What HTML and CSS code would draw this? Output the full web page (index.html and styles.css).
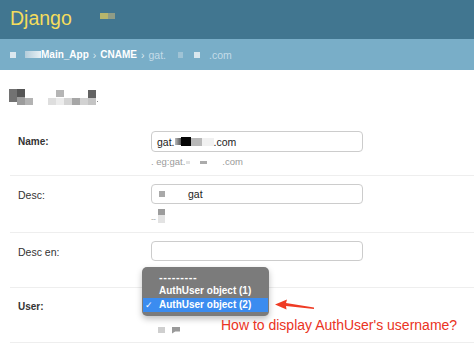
FILE: index.html
```html
<!DOCTYPE html>
<html lang="en">
<head>
    <meta charset="UTF-8">
    <title>Change CNAME | Django site admin</title>
    <link rel="stylesheet" href="styles.css">
</head>
<body>
    <header class="header">
        <div class="branding">Django</div>
        <span class="header-user"></span>
    </header>

    <div class="breadcrumbs">
        <span class="crumb-home"></span><span class="crumb-blur"></span><a>Main_App</a><span class="sep">›</span><a>CNAME</a><span class="sep">›</span><span class="current">gat.</span><span class="crumb-faint"></span><span class="crumb-square"></span><span class="current">.com</span>
    </div>

    <div class="content">
        <h1 class="title">
            <!-- pixelated (redacted) page title -->
            <svg width="92" height="17" viewBox="0 0 92 17">
                <rect x="0" y="0" width="8" height="13" fill="#727272"/>
                <rect x="8" y="0" width="8" height="8" fill="#555555"/>
                <rect x="8" y="8" width="8" height="8" fill="#9c9c9c"/>
                <rect x="16" y="9" width="8" height="7" fill="#b3b3b3"/>
                <rect x="39" y="9" width="8" height="7" fill="#dedede"/>
                <rect x="47" y="1" width="8" height="7" fill="#b5b5b5"/>
                <rect x="47" y="9" width="8" height="7" fill="#ececec"/>
                <rect x="55" y="9" width="8" height="7" fill="#d4d4d4"/>
                <rect x="63" y="9" width="8" height="7" fill="#a6a6a6"/>
                <rect x="71" y="9" width="8" height="7" fill="#d2d2d2"/>
                <rect x="79" y="1" width="8" height="8" fill="#626262"/>
                <rect x="79" y="9" width="8" height="7" fill="#c4c4c4"/>
                <rect x="88" y="12" width="1" height="1" fill="#888888"/>
            </svg>
        </h1>

        <form class="change-form">
            <div class="form-row">
                <label class="required">Name:</label>
                <div class="field">
                    <div class="input">gat.<span class="mask-a"></span><span class="mask-b"></span><span class="mask-c"></span><span class="mask-d"></span>.com</div>
                    <div class="help">. eg:gat.<span class="help-faint"></span><span class="help-dash"></span>.com</div>
                </div>
            </div>

            <div class="form-row">
                <label>Desc:</label>
                <div class="field">
                    <div class="input"><span class="desc-square"></span><span class="desc-text">gat</span></div>
                    <div class="help help-blocks"><span class="dashes">--</span><span class="help-flag"></span></div>
                </div>
            </div>

            <div class="form-row">
                <label>Desc en:</label>
                <div class="field">
                    <div class="input"></div>
                    <div class="help help-empty"></div>
                </div>
            </div>

            <div class="form-row user-row">
                <label class="required">User:</label>
                <div class="field">
                    <div class="select"></div>
                    <div class="help help-icons"><span class="icon-a"></span><span class="icon-b"></span></div>
                </div>

                <div class="menu">
                    <div class="opt"><span class="check"></span><span class="dashes-opt">---------</span></div>
                    <div class="opt"><span class="check"></span>AuthUser object (1)</div>
                    <div class="opt selected"><span class="check">✓</span>AuthUser object (2)</div>
                </div>

                <svg class="arrow" width="42" height="14" viewBox="0 0 42 14">
                    <path d="M1 5.5 L13 0.5 L12 4 L40 8.5 L40 10 L12 7 L12.5 10.5 Z" fill="#ef3b24"/>
                </svg>
                <div class="note">How to display AuthUser's username?</div>
            </div>
        </form>
    </div>
</body>
</html>
```

FILE: styles.css
```css
body, html {
    margin: 0;
    padding: 0;
    font-family: "Liberation Sans", Arial, Helvetica, sans-serif;
    color: #333;
    background: #fff;
}

.header {
    display: flex;
    align-items: flex-start;
    height: 39px;
    background: #417690;
    padding-left: 10px;
}

.branding {
    font-size: 19.5px;
    line-height: 37px;
    color: #f5dd5d;
}

.header-user {
    width: 15px;
    height: 6px;
    margin: 13px 0 0 28px;
    background: linear-gradient(90deg, #b6b56c 0 55%, #8f9c86 55%);
}

.breadcrumbs {
    display: flex;
    align-items: center;
    height: 31px;
    padding-left: 10px;
    background: #79aec8;
    font-size: 10.5px;
    color: #c4dce8;
}

.breadcrumbs a {
    color: #fff;
    font-weight: bold;
    font-size: 10px;
}

.breadcrumbs .sep {
    margin: 0 4px;
    color: #dbe9f0;
}

.crumb-home {
    width: 6px;
    height: 6px;
    background: #dce8ef;
    margin-right: 9px;
}

.crumb-blur {
    width: 16px;
    height: 7px;
    background: linear-gradient(90deg, #b3cddb, #e9f1f5);
}

.crumb-faint {
    width: 5px;
    height: 6px;
    margin-left: 12px;
    background: #9fc3d5;
}

.crumb-square {
    width: 6px;
    height: 6px;
    margin: 0 9px 0 11px;
    background: #d9e7ee;
}

.content {
    padding: 19px 0 0 0;
}

.title {
    margin: 0 0 0 9px;
    height: 17px;
    line-height: 0;
}

.change-form {
    margin-top: 16px;
}

.form-row {
    display: flex;
    margin-left: 10px;
    padding: 8px 0 8px 8px;
    border-bottom: 1px solid #eee;
}

.form-row:first-child {
    padding-top: 9px;
    padding-bottom: 7px;
}

.form-row label {
    width: 133px;
    font-size: 10.5px;
    line-height: 20px;
    padding-top: 1px;
    color: #333;
}

.form-row label.required {
    font-weight: bold;
    font-size: 10px;
}

.field {
    display: flex;
    flex-direction: column;
}

.input {
    box-sizing: border-box;
    width: 212px;
    height: 20px;
    border: 1px solid #ccc;
    border-radius: 4px;
    padding-left: 5px;
    font-size: 10.5px;
    line-height: 18px;
    color: #222;
    display: flex;
    align-items: center;
}

.form-row:first-child .input {
    height: 21px;
}

.mask-a { width: 6px; height: 7px; background: linear-gradient(90deg, #bbb, #555); }
.mask-b { width: 10px; height: 9px; background: #050505; }
.mask-c { width: 11px; height: 8px; background: #b9b9b9; }
.mask-d { width: 12px; height: 8px; background: #f1f1f1; }

.help {
    margin-top: 4px;
    font-size: 9.5px;
    line-height: 12px;
    color: #9a9a9a;
    display: flex;
    align-items: center;
}

.help-faint {
    width: 4px;
    height: 3px;
    margin-left: 1px;
    background: #e2e2e2;
}

.help-dash {
    width: 7px;
    height: 3px;
    margin: 0 15px 0 10px;
    background: #ababab;
}

.desc-square {
    width: 6px;
    height: 6px;
    margin-left: 2px;
    background: #a9a9a9;
}

.desc-text {
    margin-left: 23px;
}

.help-blocks {
    margin-top: 5px;
    height: 15px;
    align-items: flex-end;
}

.dashes {
    font-size: 8px;
    line-height: 10px;
    color: #999;
    letter-spacing: -0.5px;
}

.help-flag {
    width: 7px;
    height: 14px;
    margin: 0 0 1px 3px;
    background: linear-gradient(180deg, #9c9c9c 0 40%, #e3e3e3 40%);
}

.help-empty {
    height: 14px;
}

.user-row {
    position: relative;
    padding-bottom: 9px;
}

.select {
    box-sizing: border-box;
    width: 118px;
    height: 20px;
    border: 1px solid #ccc;
    border-radius: 4px;
    background: #f4f4f4;
}

.help-icons {
    margin-top: 11px;
    height: 6px;
    gap: 7px;
    padding-left: 7px;
}

.icon-a {
    width: 7px;
    height: 6px;
    background: #cfcfcf;
}

.icon-b {
    width: 8px;
    height: 7px;
    background: #9a9a9a;
    clip-path: polygon(0 0, 100% 0, 100% 70%, 40% 70%, 0 100%);
}

.menu {
    position: absolute;
    left: 132px;
    top: -21px;
    width: 127px;
    padding: 3px 0 4px;
    background: #7b7b7b;
    border-radius: 5px;
    box-shadow: 0 3px 6px rgba(0, 0, 0, 0.25);
    color: #fff;
    font-size: 10px;
    font-weight: bold;
}

.opt {
    display: flex;
    align-items: center;
    height: 14px;
    line-height: 14px;
}

.opt.selected {
    background: #3b8cf0;
    margin: 0 1px;
}

.check {
    width: 14px;
    padding-left: 3px;
    font-family: "DejaVu Sans", sans-serif;
    font-weight: normal;
    font-size: 9px;
}

.opt.selected .check {
    padding-left: 2px;
}

.dashes-opt {
    letter-spacing: 0.6px;
    font-size: 11px;
}

.arrow {
    position: absolute;
    left: 264px;
    top: 11px;
}

.note {
    position: absolute;
    left: 211px;
    top: 29px;
    font-size: 14px;
    line-height: 16px;
    color: #ea3323;
    white-space: nowrap;
}
```
